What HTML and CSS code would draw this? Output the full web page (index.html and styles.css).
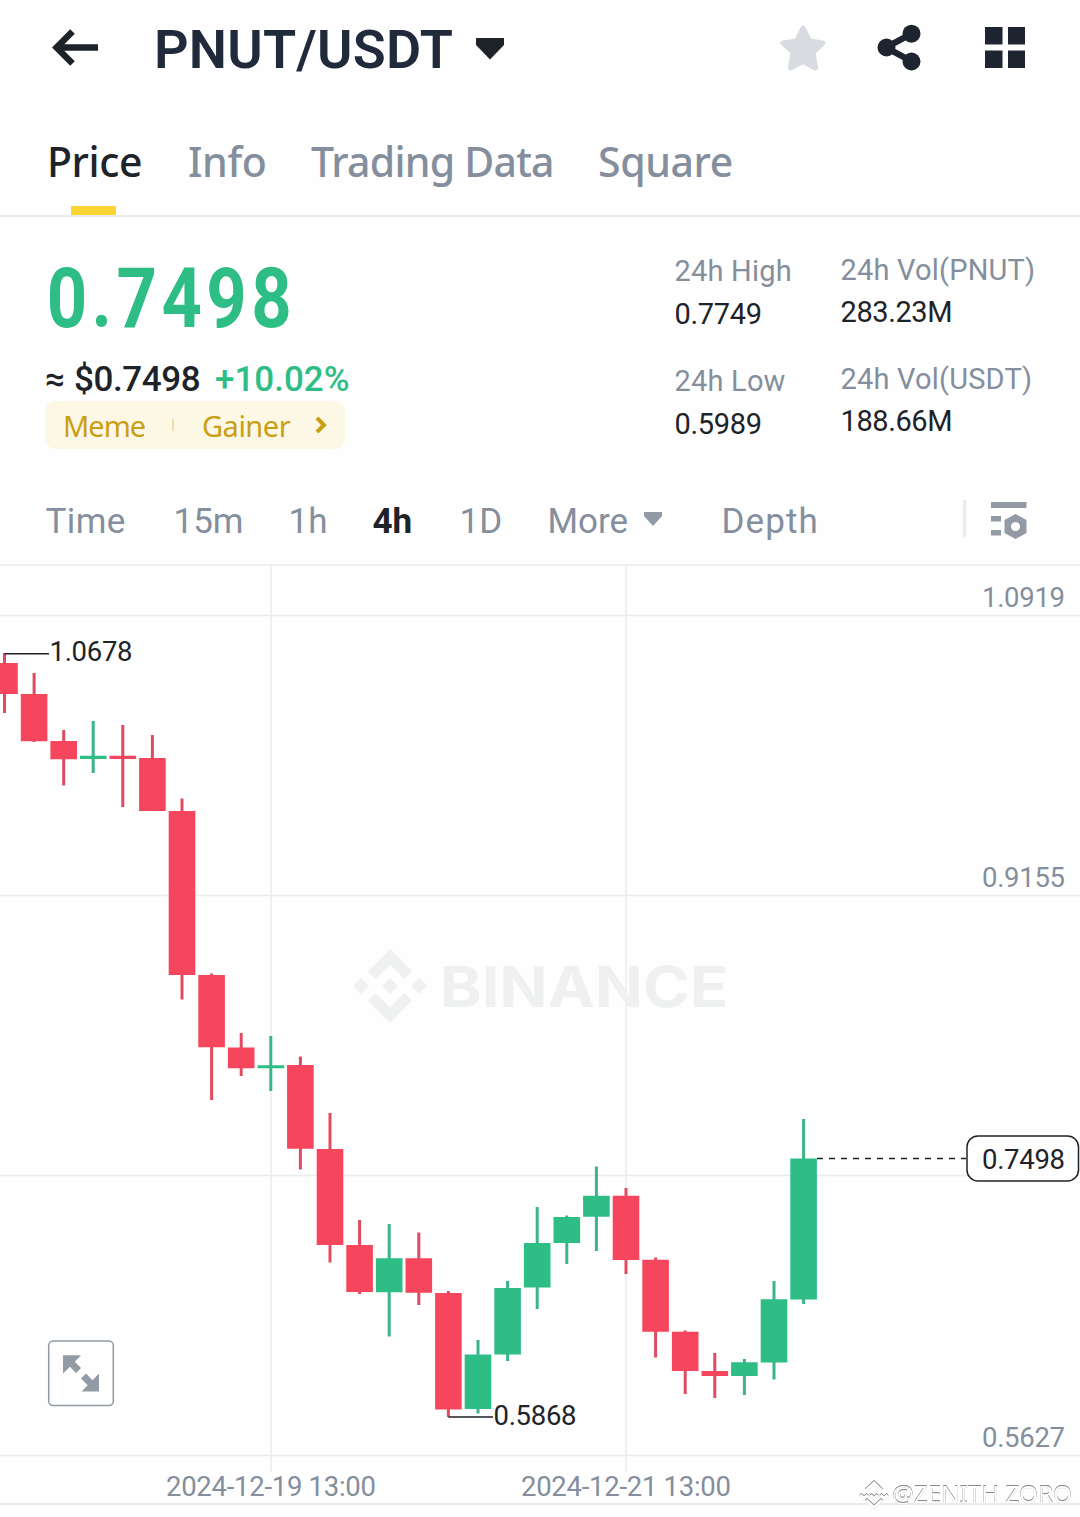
FILE: index.html
```html
<!DOCTYPE html>
<html lang="en">
<head>
<meta charset="utf-8">
<title>PNUT/USDT</title>
<link rel="stylesheet" href="styles.css">
</head>
<body>
<header class="topbar">
  <svg class="back" width="48" height="38" viewBox="0 0 48 38"><path d="M20.500 2.500 4.500 18.500l16 16M5 18.500h41" fill="none" stroke="#1e2329" stroke-width="6.500"/></svg>
  <h1 class="pair">PNUT/USDT</h1>
  <svg class="caret" width="28" height="22" viewBox="0 0 28 22"><path d="M0 0h28v7L14 21.500 0 7z" fill="#1e2329"/></svg>
  <div class="actions">
    <svg width="46" height="48" viewBox="0 0 46 48"><path d="M23 4 29.500 17 43 19 33 28.500 35.500 44 23 37.500 10.500 44 13 28.500 3 19 16.500 17z" fill="#d8dce1" stroke="#d8dce1" stroke-width="5" stroke-linejoin="round"/></svg>
    <svg width="44" height="48" viewBox="0 0 44 48"><path d="M35 9.500 9 23.500l26 14" fill="none" stroke="#1e2531" stroke-width="6.500"/><g fill="#1e2531"><circle cx="34.500" cy="9.700" r="9"/><circle cx="9.500" cy="23.500" r="9"/><circle cx="34.500" cy="37.500" r="9"/></g></svg>
    <svg width="40" height="42" viewBox="0 0 40 42"><path d="M0 0h17.500v17.500H0zM23 0h17v17.500H23zM0 23.500h17.500V41H0zM23 23.500h17V41H23z" fill="#1e2531"/></svg>
  </div>
</header>
<nav class="tabs">
  <span class="tab tab-active">Price</span>
  <span class="tab tab-info">Info</span>
  <span class="tab tab-data">Trading Data</span>
  <span class="tab tab-square">Square</span>
</nav>
<section class="summary">
  <div class="quote">
    <div class="price">0.7498</div>
    <div class="fiat"><span class="approx">≈</span><span class="usd">$0.7498</span><span class="change">+10.02%</span></div>
    <div class="tags"><span class="meme">Meme</span><i class="tag-sep"></i><span class="gainer">Gainer</span><svg width="14" height="18" viewBox="0 0 14 18"><path d="m3 2 7 7-7 7" fill="none" stroke="#c99f14" stroke-width="4"/></svg></div>
  </div>
  <dl class="stats stats-range">
    <dt class="high">24h High</dt><dd>0.7749</dd>
    <dt class="low">24h Low</dt><dd>0.5989</dd>
  </dl>
  <dl class="stats stats-volume">
    <dt>24h Vol(PNUT)</dt><dd>283.23M</dd>
    <dt>24h Vol(USDT)</dt><dd>188.66M</dd>
  </dl>
</section>
<nav class="intervals">
  <span>Time</span><span>15m</span><span>1h</span><span class="selected">4h</span><span>1D</span>
  <span class="more">More <svg width="18" height="14" viewBox="0 0 18 14"><path d="M0 0h18v4L9 14 0 4z" fill="#929aa5"/></svg></span>
  <span>Depth</span>
  <i class="divider"></i>
  <svg class="settings" width="36" height="38" viewBox="0 0 36 38"><path d="M0 1h35.500v6H0zM0 15h10v5.500H0zM0 29h10v5.500H0z" fill="#929aa5"/><path fill-rule="evenodd" d="M24.500 13 35.500 19v13L24.500 38l-11-6V19zM24.500 21a4.500 4.500 0 1 0 .01 0z" fill="#929aa5"/></svg>
</nav>
<main class="chart">
<svg width="1080" height="953" viewBox="0 564 1080 953">
  <g class="grid">
    <path d="M0 615.500H1080M0 895.500H1080M0 1175.500H1080M0 1455.500H1080"/>
    <path d="M271 565V1472M626 565V1472" class="grid-v"/>
    <path d="M0 1504H1080" class="axis"/>
  </g>
  <g class="watermark">
    <path d="M390 949 412 971.500 404.500 979 390 964.500 375.500 979 368 971.500zM390 1023 412 1000.500 404.500 993 390 1007.500 375.500 993 368 1000.500zM390 978l8 8-8 8-8-8zM361 978l8 8-8 8-8-8zM419 978l8 8-8 8-8-8z"/>
    <text x="440" y="1006.500" textLength="288" lengthAdjust="spacingAndGlyphs">BINANCE</text>
  </g>
  <g class="down">
    <path class="wick" d="M4.500 653V713M34.100 673V742M63.700 730V785.500M122.800 725V807M152.400 735V811M182 798.500V999.500M211.600 973.500V1100M241.200 1033V1076M300.400 1056.500V1169.500M330 1113V1262.500M359.600 1220V1294M418.800 1232.500V1305M448.400 1291V1417M626 1188V1274M655.600 1257.500V1357.500M685.200 1330.500V1394M714.800 1353V1398"/>
    <path d="M0 663H17.800V694H0zM20.800 694h26.600v47.200h-26.600zM50.400 741h26.600v18.200h-26.600zM109.500 755.800h26.600v3.200h-26.600zM139.100 758h26.600v53h-26.600zM168.700 811h26.600v164h-26.600zM198.300 975h26.600v72.200h-26.600zM227.900 1047.400h26.600v20.800h-26.600zM287.100 1065h26.600v83.700h-26.600zM316.700 1149h26.600v96h-26.600zM346.300 1245h26.600v47h-26.600zM405.500 1258.300h26.600v34.500h-26.600zM435.100 1293h26.600v116.500h-26.600zM612.700 1195.700h26.600v64.300h-26.600zM642.300 1259.700h26.600v72h-26.600zM671.900 1331.700h26.600v39.200h-26.600zM701.500 1371h26.600v5h-26.600z"/>
  </g>
  <g class="up">
    <path class="wick" d="M93.200 721V773M270.800 1036V1091M389.200 1224V1336.500M478 1340V1413.500M507.600 1281V1361M537.200 1207V1309M566.800 1215.500V1264M596.400 1166.500V1251M744.400 1359V1395M774 1281V1379.500M803.600 1119V1304"/>
    <path d="M79.900 755.800h26.600v3.200h-26.600zM257.500 1065.200h26.600v3h-26.600zM375.900 1258.300h26.600v34h-26.600zM464.700 1354.500h26.600v54.500h-26.600zM494.300 1288h26.600v66.500h-26.600zM523.900 1243h26.600v44.600h-26.600zM553.500 1217h26.600v25.900h-26.600zM583.100 1195.800h26.600v20.900h-26.600zM731.100 1362.300h26.600v13.700h-26.600zM760.700 1299.200h26.600v63.200h-26.600zM790.300 1158.500h26.600v141h-26.600z"/>
  </g>
  <path class="leader" d="M4.500 653.700H49M448.400 1417H493"/>
  <path class="leader" d="M817 1158.500H966" stroke-dasharray="6 6"/>
  <rect class="badge" x="967" y="1136" width="111.500" height="45" rx="11"/>
  <g class="mark">
    <text x="49.500" y="661" textLength="83">1.0678</text>
    <text x="493.500" y="1424.500" textLength="83">0.5868</text>
    <text x="982" y="1168.500" textLength="83">0.7498</text>
  </g>
  <g class="scale">
    <text x="982" y="606.500" textLength="83">1.0919</text>
    <text x="982" y="886.500" textLength="83">0.9155</text>
    <text x="982" y="1446.500" textLength="83">0.5627</text>
    <text x="166" y="1495.500" textLength="210">2024-12-19 13:00</text>
    <text x="521" y="1495.500" textLength="210">2024-12-21 13:00</text>
  </g>
  <g class="expand">
    <rect x="48.700" y="1341" width="64.600" height="64.600" rx="4.500"/>
    <path d="M63 1355.300H81L74.800 1361.800 81 1368 76 1373 70 1366.800 63 1373.500zM99 1391.500H81.500L87.700 1385.200 81 1378.500 86 1373.500 92.500 1380.300 99 1373.500z"/>
  </g>
  <g class="credit">
    <path d="M866 1490.500 874 1483 882 1490.500M860.500 1495 864 1498.500 867.500 1495M870.500 1495 874 1498.500 877.500 1495M880.500 1495 884 1498.500 887.500 1495M866 1500 874 1507.500 882 1500"/>
    <text x="892" y="1502.500" textLength="180" lengthAdjust="spacingAndGlyphs">@ZENITH ZORO</text>
  </g>
</svg>
</main>
</body>
</html>
```
FILE: styles.css
```css
* { box-sizing: border-box; margin: 0; }
body {
  width: 1080px;
  height: 1517px;
  overflow: hidden;
  background: #fefefe;
  color: #1e2329;
  font-family: Roboto, "Liberation Sans", sans-serif;
}
svg { display: block; flex: none; }
span, dt, dd { white-space: nowrap; }

.topbar { display: flex; align-items: center; height: 96px; padding-left: 52px; padding-right: 55px; }
.pair { width: 324px; margin-left: 54px; padding-top: 3px; font-size: 54px; line-height: 60px; font-weight: 600; color: #202a3b; letter-spacing: 0.2px; }
.caret { margin-left: -2px; margin-top: 1px; }
.actions { display: flex; align-items: center; margin-left: auto; }
.actions svg + svg { margin-left: 51px; }
.actions svg:last-child { margin-left: 64px; }

.tabs { display: grid; grid-template-columns: 141px 123px 287px auto; height: 121px; padding: 35px 0 0 47px; border-bottom: 2px solid #ebecec; }
.tab { font-family: "Noto Sans", sans-serif; font-size: 41px; line-height: 60px; font-weight: 500; color: #848e9c; letter-spacing: -0.4px; }
.tab-data { letter-spacing: -0.75px; }
.tab-active { position: relative; color: #1e2329; }
.tab-active::after { content: ""; position: absolute; left: 24px; top: 75px; width: 45px; height: 9px; background: #fcd535; }

.summary { display: flex; height: 263px; padding: 0 0 0 45px; }
.quote { width: 629.5px; padding-top: 42px; }
/* Narrow, widely spaced digits for the headline price */
.price { padding-left: 2px; font-size: 83px; line-height: 80px; font-weight: 700; color: #2ebd85; letter-spacing: 5.2px; transform: scaleX(0.85); transform-origin: 0 0; }
.fiat { display: flex; height: 40px; margin-top: 19px; font-size: 35px; line-height: 43px; font-weight: 500; }
.approx { width: 29px; font-size: 35px; }
.usd { width: 141px; letter-spacing: -0.4px; }
.change { color: #2ebd85; }
.tags { display: flex; align-items: center; width: 300px; height: 48px; margin-top: 3px; padding-left: 18px; border-radius: 11px; background: #fdf7e5; color: #c99f14; font-family: "Noto Sans", sans-serif; font-size: 29px; letter-spacing: -0.5px; }
.meme { width: 109px; letter-spacing: -1px; }
.tag-sep { width: 2px; height: 12px; background: #f0dfac; }
.gainer { width: 112px; margin-left: 28px; }

.stats { font-size: 29px; line-height: 40px; }
.stats-range { width: 166px; padding-top: 34px; }
.stats-volume { padding-top: 33px; }
.stats dt { color: #848e9c; letter-spacing: 0.2px; }
.stats dd { height: 70px; line-height: 46px; letter-spacing: -0.3px; }
.stats-volume dd { height: 69px; padding-bottom: 1px; margin-top: -1px; margin-bottom: 1px; letter-spacing: -0.4px; }

.intervals { display: flex; align-items: center; height: 84px; padding-left: 45.5px; font-size: 35px; line-height: 48px; color: #848e9c; }
.intervals span:nth-child(1) { width: 128px; letter-spacing: 0.4px; }
.intervals span:nth-child(2) { width: 115px; }
.intervals span:nth-child(3) { width: 84px; }
.intervals span:nth-child(4) { width: 87px; }
.intervals span:nth-child(5) { width: 88px; }
.intervals span:nth-child(7) { width: 241px; letter-spacing: 1.1px; }
.intervals .selected { color: #1e2329; font-weight: 700; }
.intervals .more { display: flex; align-items: center; justify-content: space-between; width: 114px; margin-right: 60px; }
.intervals .more svg { margin-top: -6px; }
.intervals .divider { width: 3px; height: 37px; margin-top: -7px; margin-right: 25px; background: #eaecef; }
.settings { margin-top: -5px; }

.chart { height: 953px; border-top: 2px solid #eef0f1; }
.chart svg { margin-top: -2px; }
.grid { fill: none; stroke: #e9ebed; stroke-width: 1.3; }
.grid-v { stroke-width: 1.5; }
.axis { stroke-width: 2; }
.watermark { fill: #eff0f0; }
.watermark text { font: 700 56px Inter, sans-serif; }
.wick { fill: none; stroke-width: 3; }
.down { fill: #f6465d; }
.down .wick { stroke: #df4c61; }
.up { fill: #2ebd85; }
.up .wick { stroke: #3db488; }
.leader { fill: none; stroke: #1e2329; stroke-width: 1.5; }
.badge { fill: #fefefe; stroke: #1e2329; stroke-width: 1.5; }
.mark text, .scale text { font-family: Roboto, sans-serif; font-size: 27.5px; }
.mark { fill: #1e2329; }
.scale { fill: #848e9c; }
.expand { fill: #929aa5; }
.expand rect { fill: none; stroke: #929aa5; stroke-width: 1.5; }
.credit { filter: drop-shadow(0.8px -0.8px 0.3px #888) drop-shadow(0.5px 0.5px 0.3px #aaa); }
.credit path { fill: none; stroke: #fff; stroke-width: 3; }
.credit text { fill: #fff; font: 400 24px "Noto Sans", sans-serif; }
```
